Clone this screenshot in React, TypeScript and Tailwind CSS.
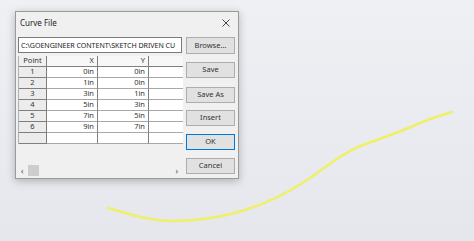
import React from "react";

const rows = [
  { n: "1", x: "0in", y: "0in" },
  { n: "2", x: "1in", y: "0in" },
  { n: "3", x: "3in", y: "1in" },
  { n: "4", x: "5in", y: "3in" },
  { n: "5", x: "7in", y: "5in" },
  { n: "6", x: "9in", y: "7in" },
  { n: "", x: "", y: "" },
];

function Btn({ label, className = "" }: { label: string; className?: string }) {
  return (
    <div
      className={`flex h-[16px] w-[49px] items-center justify-center border border-[#adadad] bg-[#e1e1e1] text-[7.5px] text-[#333] ${className}`}
    >
      {label}
    </div>
  );
}

export default function App() {
  return (
    <div
      className="relative h-[241px] w-[474px] overflow-hidden bg-gradient-to-b from-[#eff0f4] to-[#e5e7ed]"
      style={{ fontFamily: '"Noto Sans", "Open Sans", sans-serif' }}
    >
      <svg className="absolute inset-0" width="474" height="241" viewBox="0 0 474 241">
        <path
          d="M108 208 C 130 214, 150 221, 172 221 C 200 221, 225 216, 242 211 C 262 205, 285 195, 307 180 C 325 168, 342 153, 363 145 C 380 139, 400 132, 420 123 C 432 118, 442 115, 452 112"
          fill="none"
          stroke="#eef15a"
          strokeWidth="2.6"
          strokeLinecap="round"
          opacity="0.9"
        />
      </svg>

      <div className="absolute left-[15px] top-[11px] flex h-[168px] w-[224px] flex-col border border-[#9a9a9a] bg-[#f0f0f0] shadow-[0_2px_8px_rgba(0,0,0,0.25)]">
        {/* title bar */}
        <div className="flex h-[22px] items-center justify-between pl-[4px] pr-[8px]">
          <span className="text-[8px] text-[#222]">Curve File</span>
          <svg width="8" height="8" viewBox="0 0 8 8">
            <path d="M0.5 0.5 L7.5 7.5 M7.5 0.5 L0.5 7.5" stroke="#333" strokeWidth="0.9" />
          </svg>
        </div>

        <div className="flex gap-[4px] pl-[2px] pt-[3px]">
          {/* left column */}
          <div className="flex w-[164px] flex-col">
            <div className="flex h-[16px] items-center overflow-hidden whitespace-nowrap border border-[#7a7a7a] bg-white pl-[2px] text-[7.1px] tracking-[-0.05px] text-[#222]">
              C:\GOENGINEER CONTENT\SKETCH DRIVEN CU
            </div>

            <div className="mt-[3px] grid grid-cols-[28px_51px_51px_34px] border-l border-[#b0b0b0] text-[7.5px] text-[#333]">
              <div className="flex h-[11px] items-center justify-center border-b border-r border-[#7f7f7f] bg-[#f0f0f0]">
                Point
              </div>
              <div className="flex h-[11px] items-center justify-end border-b border-r border-[#7f7f7f] bg-[#f7f7f7] pr-[3px]">
                X
              </div>
              <div className="flex h-[11px] items-center justify-end border-b border-r border-[#7f7f7f] bg-[#f7f7f7] pr-[3px]">
                Y
              </div>
              <div className="h-[11px] border-b border-[#7f7f7f] bg-[#f7f7f7]" />
              {rows.map((r, i) => (
                <React.Fragment key={i}>
                  <div className="flex h-[11px] items-center justify-center border-b border-r border-[#7f7f7f] bg-[#ececec]">
                    {r.n}
                  </div>
                  <div className="flex h-[11px] items-center justify-end border-b border-r border-b-[#a8a8a8] border-r-[#7f7f7f] bg-white pr-[3px]">
                    {r.x}
                  </div>
                  <div className="flex h-[11px] items-center justify-end border-b border-r border-b-[#a8a8a8] border-r-[#7f7f7f] bg-white pr-[3px]">
                    {r.y}
                  </div>
                  <div className="h-[11px] border-b border-[#a8a8a8] bg-white" />
                </React.Fragment>
              ))}
            </div>

            <div className="mt-[21px] flex h-[11px] items-center justify-between pl-[3px] pr-[4px] text-[8px] text-[#444]">
              <div className="flex items-center gap-[5px]">
                <span>‹</span>
                <div className="h-[11px] w-[11px] bg-[#cdcdcd]" />
              </div>
              <span>›</span>
            </div>
          </div>

          {/* right column */}
          <div className="flex flex-col">
            <Btn label="Browse..." className="h-[17px]" />
            <Btn label="Save" className="mt-[8px]" />
            <Btn label="Save As" className="mt-[9px]" />
            <Btn label="Insert" className="mt-[7px]" />
            <div className="mt-[8px] flex h-[16px] w-[49px] items-center justify-center border border-[#0078d7] bg-[#e1e1e1] text-[7.5px] text-[#333]">
              OK
            </div>
            <Btn label="Cancel" className="mt-[8px]" />
          </div>
        </div>
      </div>
    </div>
  );
}
